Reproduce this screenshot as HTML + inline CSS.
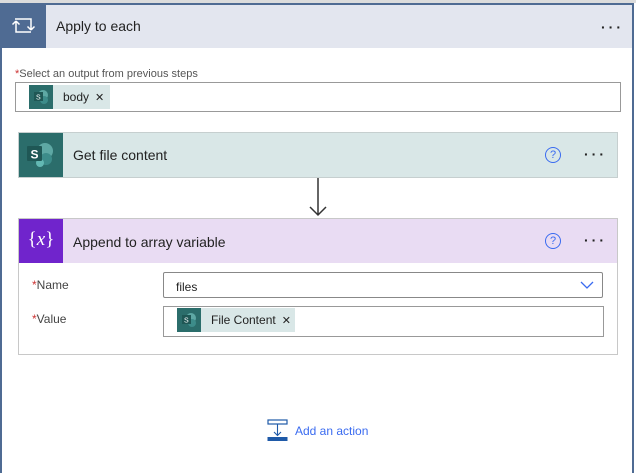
<!DOCTYPE html>
<html><head><style>
body{margin:0;width:636px;height:473px;background:#fff;font-family:"Liberation Sans",sans-serif;position:relative;overflow:hidden;color:#222}
.a{position:absolute}
.dots{font-size:14px;letter-spacing:3px;color:#222;font-weight:bold}
.q{width:14px;height:14px;border:1.3px solid #3a6bf0;border-radius:50%;color:#3a6bf0;font-size:11px;text-align:center;line-height:14px}
.tok{background:#d9e7e7;height:24px;display:flex;align-items:center;font-size:12px}
.ti{width:24px;height:24px;background:#2b6d6b;display:flex;align-items:center;justify-content:center}
</style></head><body>
<div class="a" style="left:0;top:0;width:636px;height:3px;background:#dcdcdc"></div>
<div class="a" style="left:0;top:3px;width:634px;height:470px;border-left:2px solid #4f6b93;border-right:2px solid #4f6b93;border-top:2px solid #4f6b93;box-sizing:border-box"></div>
<div class="a" style="left:2px;top:5px;width:630px;height:43px;background:#e3e6ef"></div>
<div class="a" style="left:0;top:3px;width:46px;height:45px;background:#4f6b93">
<svg width="46" height="45"><path d="M15 16h16v11M31 27l-3.5-3.5M31 27l3.5-3.5M16 18v11h15M16 18l-3.5 3.5M16 18l3.5 3.5" stroke="#fff" stroke-width="1.5" fill="none"/></svg></div>
<div class="a" style="left:56px;top:18px;font-size:14px">Apply to each</div>
<div class="a dots" style="left:601px;top:19px">···</div>
<div class="a" style="left:15px;top:68px;font-size:11px;color:#555"><span style="color:#c33">*</span>Select an output from previous steps</div>
<div class="a" style="left:15px;top:82px;width:606px;height:30px;border:1px solid #999;box-sizing:border-box"></div>
<div class="a tok" style="left:29px;top:85px;width:81px"><div class="ti"><svg width="16" height="16"><circle cx="10" cy="6" r="5" fill="#5ea8a4"/><circle cx="11" cy="11" r="4" fill="#3d8c8a"/><rect x="1" y="3" width="9" height="9" fill="#1f5755"/><text x="3" y="10.5" font-size="7" fill="#fff" font-family="Liberation Sans">S</text></svg></div><span style="margin-left:10px">body</span><span style="margin-left:6px;font-size:11px">✕</span></div>
<div class="a" style="left:18px;top:132px;width:600px;height:46px;background:#d9e7e7;border:1px solid #c6cfcf;box-sizing:border-box"></div>
<div class="a" style="left:19px;top:133px;width:44px;height:44px;background:#2b6d6b"><svg width="44" height="44"><circle cx="26" cy="18" r="8" fill="#5ea8a4"/><circle cx="27" cy="26" r="6" fill="#3d8c8a"/><circle cx="21" cy="30" r="4" fill="#63b8b3"/><rect x="8" y="13" width="15" height="15" rx="1" fill="#1f5755"/><text x="11.5" y="25.5" font-size="12" font-weight="bold" fill="#fff" font-family="Liberation Sans">S</text></svg></div>
<div class="a" style="left:73px;top:147px;font-size:14px">Get file content</div>
<div class="a q" style="left:545px;top:147px">?</div>
<div class="a dots" style="left:584px;top:146px">···</div>
<svg class="a" style="left:308px;top:178px" width="20" height="40"><path d="M10 0v37M2 29l8 8 8-8" stroke="#333" stroke-width="1.5" fill="none"/></svg>
<div class="a" style="left:18px;top:218px;width:600px;height:137px;border:1px solid #c8c8c8;box-sizing:border-box"></div>
<div class="a" style="left:19px;top:219px;width:598px;height:44px;background:#e9dcf3"></div>
<div class="a" style="left:19px;top:219px;width:44px;height:44px;background:#7024cc;color:#fff;font-size:19px;text-align:center;line-height:42px;font-family:'Liberation Serif',serif">{<i>x</i>}</div>
<div class="a" style="left:73px;top:234px;font-size:14px">Append to array variable</div>
<div class="a q" style="left:545px;top:233px">?</div>
<div class="a dots" style="left:584px;top:232px">···</div>
<div class="a" style="left:32px;top:278px;font-size:12px;color:#444"><span style="color:#c33">*</span>Name</div>
<div class="a" style="left:163px;top:272px;width:440px;height:26px;border:1px solid #888;border-radius:2px;box-sizing:border-box;font-size:12px;padding:7px 12px">files</div>
<svg class="a" style="left:580px;top:281px" width="14" height="8"><path d="M1 1l6 6 6-6" stroke="#3a6bf0" fill="none" stroke-width="1.3"/></svg>
<div class="a" style="left:32px;top:312px;font-size:12px;color:#444"><span style="color:#c33">*</span>Value</div>
<div class="a" style="left:163px;top:306px;width:441px;height:31px;border:1px solid #999;box-sizing:border-box"></div>
<div class="a tok" style="left:177px;top:308px;width:118px"><div class="ti"><svg width="16" height="16"><circle cx="10" cy="6" r="5" fill="#5ea8a4"/><circle cx="11" cy="11" r="4" fill="#3d8c8a"/><rect x="1" y="3" width="9" height="9" fill="#1f5755"/><text x="3" y="10.5" font-size="7" fill="#fff" font-family="Liberation Sans">S</text></svg></div><span style="margin-left:10px">File Content</span><span style="margin-left:6px;font-size:11px">✕</span></div>
<svg class="a" style="left:267px;top:419px" width="22" height="22"><rect x="1" y="1" width="19" height="4" fill="none" stroke="#1f5aa8" stroke-width="1.2"/><path d="M10.5 5v11M7 13l3.5 3.5 3.5-3.5" stroke="#1f5aa8" fill="none" stroke-width="1.1"/><rect x="0.5" y="18" width="20" height="4" fill="#1f5aa8"/></svg>
<div class="a" style="left:295px;top:424px;font-size:12px;color:#3a6bf0">Add an action</div>
</body></html>
